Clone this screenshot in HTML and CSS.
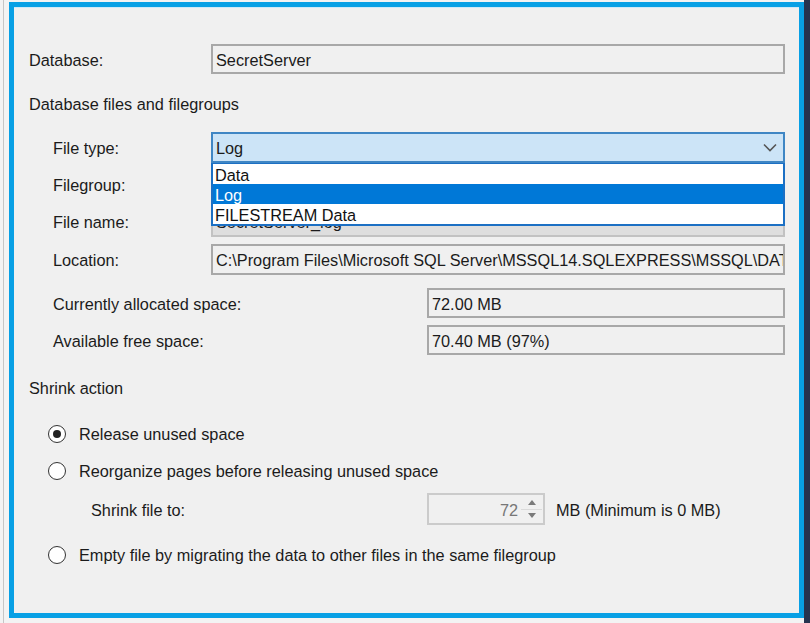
FILE: index.html
```html
<!DOCTYPE html>
<html>
<head>
<meta charset="utf-8">
<link rel="stylesheet" href="styles.css">
</head>
<body>
<div class="gutter"><div class="gutter-line"></div></div>
<div class="dialog">
  <div class="row row-db">
    <div class="lbl lbl-top">Database:</div>
    <div class="field">SecretServer</div>
  </div>
  <div class="heading heading-files">Database files and filegroups</div>

  <div class="row sub row-filetype">
    <div class="lbl lbl-sub">File type:</div>
    <div class="combo-wrap">
      <div class="combo">
        <span>Log</span>
        <svg class="chev" width="14" height="9" viewBox="0 0 14 9"><path d="M1 1.5 L7 7.5 L13 1.5" fill="none" stroke="#555" stroke-width="1.6"/></svg>
      </div>
      <div class="droplist">
        <div class="opt">Data</div>
        <div class="opt sel">Log</div>
        <div class="opt">FILESTREAM Data</div>
      </div>
    </div>
  </div>
  <div class="row sub row-gap6">
    <div class="lbl lbl-sub">Filegroup:</div>
    <div class="field field-gray"></div>
  </div>
  <div class="row sub row-gap6">
    <div class="lbl lbl-sub">File name:</div>
    <div class="field field-gray">SecretServer_log</div>
  </div>
  <div class="row sub row-gap7">
    <div class="lbl lbl-sub">Location:</div>
    <div class="field">C:\Program Files\Microsoft SQL Server\MSSQL14.SQLEXPRESS\MSSQL\DATA\SecretServer_log.ldf</div>
  </div>

  <div class="row sub short row-cur">
    <div class="lbl lbl-wide">Currently allocated space:</div>
    <div class="field">72.00 MB</div>
  </div>
  <div class="row sub short row-gap7">
    <div class="lbl lbl-wide">Available free space:</div>
    <div class="field">70.40 MB (97%)</div>
  </div>

  <div class="heading heading-shrink">Shrink action</div>

  <div class="radio-row radio-first">
    <span class="radio checked"></span>
    <span>Release unused space</span>
  </div>
  <div class="radio-row radio-second">
    <span class="radio"></span>
    <span>Reorganize pages before releasing unused space</span>
  </div>
  <div class="row shrink-row">
    <div class="lbl lbl-shrink">Shrink file to:</div>
    <div class="spinner">
      <span class="spin-val">72</span>
      <div class="spin-btns">
        <div class="spin-btn"><svg width="8" height="5" viewBox="0 0 8 5"><path d="M0 5 L4 0 L8 5 Z" fill="#7a7a7a"/></svg></div>
        <div class="spin-btn"><svg width="8" height="5" viewBox="0 0 8 5"><path d="M0 0 L4 5 L8 0 Z" fill="#7a7a7a"/></svg></div>
      </div>
    </div>
    <div class="mb-note">MB (Minimum is 0 MB)</div>
  </div>
  <div class="radio-row radio-third">
    <span class="radio"></span>
    <span>Empty file by migrating the data to other files in the same filegroup</span>
  </div>
</div>
<div class="navy"></div>
</body>
</html>
```

FILE: styles.css
```css
html, body {
  margin: 0;
  padding: 0;
}
body {
  width: 810px;
  height: 623px;
  overflow: hidden;
  display: flex;
  background: #f3f3f3;
  font-family: "Liberation Sans", Arial, sans-serif;
  font-size: 16.3px;
  color: #1b1b1b;
}
.gutter {
  width: 9px;
  flex: none;
}
.gutter-line {
  margin-left: 3px;
  width: 1px;
  height: 100%;
  background: #c6c6c6;
}
.dialog {
  box-sizing: border-box;
  width: 795px;
  height: 616px;
  margin-top: 2px;
  flex: none;
  border: 5px solid #08a0e5;
  box-shadow: inset 0 1px 0 #cfe9f7;
  background: #f0f0f0;
  padding: 0 14px 0 15px;
  display: flex;
  flex-direction: column;
}
.navy {
  flex: 1;
  background: #26334f;
}
.row {
  display: flex;
  align-items: center;
  height: 31px;
  flex: none;
}
.row-db { margin-top: 37px; height: 30px; }
.row-filetype { margin-top: 18px; }
.row-gap6 { margin-top: 6px; }
.row-gap7 { margin-top: 7px; }
.row-cur { margin-top: 13px; }
.short { height: 30px; }
.sub { padding-left: 24px; }
.lbl {
  flex: none;
  white-space: nowrap;
  padding-top: 2px;
}
.lbl-top { width: 182px; }
.lbl-sub { width: 158px; }
.lbl-wide { width: 374px; }
.heading {
  height: 20px;
  line-height: 20px;
  flex: none;
}
.heading-files { margin-top: 20px; }
.heading-shrink { margin-top: 23px; }
.field {
  box-sizing: border-box;
  flex: 1;
  height: 100%;
  border: 2px solid #a8a8a8;
  background: #f0f0f0;
  padding: 2px 0 0 3px;
  display: flex;
  align-items: center;
  white-space: nowrap;
  overflow: hidden;
  min-width: 0;
}
.field-gray {
  background: #dedede;
  border-color: #c2c2c2;
}
.combo-wrap {
  position: relative;
  flex: 1;
  height: 100%;
}
.combo {
  box-sizing: border-box;
  height: 100%;
  background: #cce4f7;
  border: 2px solid #3f86c4;
  padding: 2px 6px 0 3px;
  display: flex;
  align-items: center;
  justify-content: space-between;
}
.chev {
  margin-top: -2px;
}
.droplist {
  position: absolute;
  top: 100%;
  left: 0;
  right: 0;
  box-sizing: border-box;
  border: 2px solid #1c70c4;
  border-top-width: 1px;
  background: #ffffff;
  z-index: 5;
}
.opt {
  height: 20px;
  line-height: 23px;
  padding-left: 2px;
  color: #111;
  overflow: hidden;
}
.opt.sel {
  background: #0078d7;
  color: #ffffff;
}
.radio-row {
  display: flex;
  align-items: center;
  height: 20px;
  flex: none;
  padding-left: 19px;
}
.radio-first { margin-top: 26px; }
.radio-second { margin-top: 17px; }
.radio-third { margin-top: 20px; }
.radio {
  box-sizing: border-box;
  width: 18px;
  height: 18px;
  border: 1.6px solid #333;
  border-radius: 50%;
  background: #fff;
  margin-right: 13px;
  flex: none;
  display: flex;
  align-items: center;
  justify-content: center;
}
.radio.checked::after {
  content: "";
  width: 8px;
  height: 8px;
  border-radius: 50%;
  background: #222;
}
.shrink-row {
  margin-top: 12px;
  height: 32px;
  padding-left: 62px;
}
.lbl-shrink { width: 336px; }
.spinner {
  box-sizing: border-box;
  width: 118px;
  height: 100%;
  border: 2px solid #cbcbcb;
  background: #f0f0f0;
  display: flex;
  align-items: center;
  justify-content: flex-end;
  flex: none;
}
.spin-val {
  color: #777;
  padding: 2px 3px 0 0;
}
.spin-btns {
  width: 21px;
  height: 26px;
  display: flex;
  flex-direction: column;
  margin-right: 1px;
}
.spin-btn {
  flex: 1;
  display: flex;
  align-items: center;
  justify-content: center;
}
.spin-btn:first-child {
  border-bottom: 1px solid #dadada;
}
.mb-note {
  margin-left: 11px;
  white-space: nowrap;
  padding-top: 2px;
}
```
